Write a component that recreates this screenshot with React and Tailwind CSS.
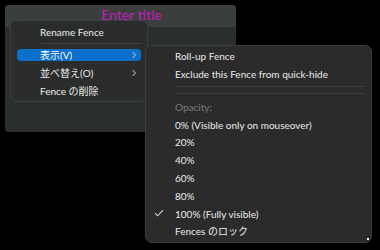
import React from "react";

const font = { fontFamily: 'Lato, "Noto Sans CJK JP", sans-serif' };

function Chevron() {
  return (
    <svg width="6" height="8" viewBox="0 0 6 8" className="shrink-0">
      <path d="M1.5 1 L4.5 4 L1.5 7" fill="none" stroke="#d0d0d0" strokeWidth="1" />
    </svg>
  );
}

function Check() {
  return (
    <svg width="10" height="8" viewBox="0 0 10 8">
      <path d="M1 4.2 L3.6 6.8 L9 1.2" fill="none" stroke="#d8d8d8" strokeWidth="1.1" />
    </svg>
  );
}

function SubItem({ children, checked, dim }) {
  return (
    <div className="relative flex h-[17.8px] items-center pl-[29px]">
      {checked && (
        <div className="absolute left-[8px] top-[4px]">
          <Check />
        </div>
      )}
      <span className={dim ? "text-[#7d7d7d]" : "text-[#ececec]"}>{children}</span>
    </div>
  );
}

export default function App() {
  return (
    <div
      className="relative h-[250px] w-[380px] overflow-hidden bg-black text-[10px] leading-none"
      style={font}
    >
      {/* Fence window */}
      <div className="absolute left-[5px] top-[5px] flex h-[127px] w-[231px] flex-col overflow-hidden rounded-[4px] bg-[#2a2e2c]">
        <div className="flex h-[22px] items-start justify-center bg-[#3a3f3c] pl-[22px] pt-[3px]">
          <span className="text-[14px] text-[#c51bc5]">Enter title</span>
        </div>
      </div>

      {/* Main context menu */}
      <div className="absolute left-[10px] top-[20px] flex h-[82px] w-[138px] flex-col rounded-[7px] border border-[#3d3f3e] bg-[#2b2c2c] pt-[2px] text-[#ececec]">
        <div className="flex h-[17px] items-center pl-[29px]">Rename Fence</div>
        <div className="flex h-[6px] items-center px-[30px] pr-[5px]">
          <div className="h-px w-full bg-[#404040]" />
        </div>
        <div className="flex h-[18px] items-center px-[6px]">
          <div className="flex h-[12px] w-full items-center justify-between rounded-[4px] bg-[#0b6fcc] pl-[23px] pr-[4px] text-white">
            <span>表示(V)</span>
            <Chevron />
          </div>
        </div>
        <div className="flex h-[18px] items-center justify-between pl-[29px] pr-[10px]">
          <span>並べ替え(O)</span>
          <Chevron />
        </div>
        <div className="flex h-[18px] items-center pl-[29px]">Fence の削除</div>
      </div>

      {/* Submenu */}
      <div className="absolute left-[145px] top-[45px] flex h-[198px] w-[227px] flex-col rounded-[7px] border border-[#3d3d3d] bg-[#2b2b2b] pt-[1px]">
        <SubItem>Roll-up Fence</SubItem>
        <SubItem>Exclude this Fence from quick-hide</SubItem>
        <div className="flex h-[15.3px] flex-col justify-start pl-[30px] pr-[6px] pt-[3px]">
          <div className="h-px w-full bg-[#3e3e3e]" />
          <div className="mt-[6px] h-px w-full bg-[#3e3e3e]" />
        </div>
        <SubItem dim>Opacity:</SubItem>
        <SubItem>0% (Visible only on mouseover)</SubItem>
        <SubItem>20%</SubItem>
        <SubItem>40%</SubItem>
        <SubItem>60%</SubItem>
        <SubItem>80%</SubItem>
        <SubItem checked>100% (Fully visible)</SubItem>
        <SubItem>Fences のロック</SubItem>
        <div className="absolute bottom-[2px] right-[2px] h-[2px] w-[2px] bg-white" />
      </div>
    </div>
  );
}
